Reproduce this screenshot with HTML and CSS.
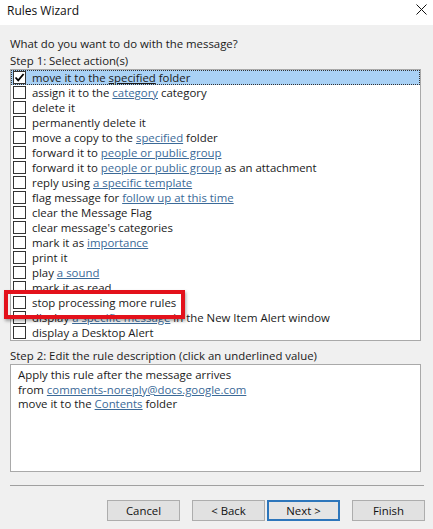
FILE: index.html
```html
<!DOCTYPE html>
<html>
<head>
<meta charset="utf-8">
<link rel="stylesheet" href="styles.css">
</head>
<body>
<div class="titlebar">
  <span class="title">Rules Wizard</span>
  <svg class="close" width="11" height="11" viewBox="0 0 11 11"><path d="M0.5 0.5 L10.5 10.5 M10.5 0.5 L0.5 10.5" stroke="#111" stroke-width="1" fill="none"/></svg>
</div>
<div class="content">
  <div class="label">What do you want to do with the message?</div>
  <div class="label">Step 1: Select action(s)</div>
  <div class="listwrap">
    <div class="list">
      <div class="row selected"><span class="cb checked"><svg width="11" height="11" viewBox="0 0 11 11"><path d="M1.5 5.5 L4.2 8.3 L9.6 2" stroke="#000" stroke-width="1.8" fill="none"/></svg></span><span>move it to the <u class="plain">specified</u> folder</span></div>
      <div class="row"><span class="cb"></span><span>assign it to the <a>category</a> category</span></div>
      <div class="row"><span class="cb"></span><span>delete it</span></div>
      <div class="row"><span class="cb"></span><span>permanently delete it</span></div>
      <div class="row"><span class="cb"></span><span>move a copy to the <a>specified</a> folder</span></div>
      <div class="row"><span class="cb"></span><span>forward it to <a>people or public group</a></span></div>
      <div class="row"><span class="cb"></span><span>forward it to <a>people or public group</a> as an attachment</span></div>
      <div class="row"><span class="cb"></span><span>reply using <a>a specific template</a></span></div>
      <div class="row"><span class="cb"></span><span>flag message for <a>follow up at this time</a></span></div>
      <div class="row"><span class="cb"></span><span>clear the Message Flag</span></div>
      <div class="row"><span class="cb"></span><span>clear message's categories</span></div>
      <div class="row"><span class="cb"></span><span>mark it as <a>importance</a></span></div>
      <div class="row"><span class="cb"></span><span>print it</span></div>
      <div class="row"><span class="cb"></span><span>play <a>a sound</a></span></div>
      <div class="row"><span class="cb"></span><span>mark it as read</span></div>
      <div class="row"><span class="cb"></span><span>stop processing more rules</span></div>
      <div class="row"><span class="cb"></span><span>display <a>a specific message</a> in the New Item Alert window</span></div>
      <div class="row"><span class="cb"></span><span>display a Desktop Alert</span></div>
    </div>
    <div class="highlight"></div>
  </div>
  <div class="label step2">Step 2: Edit the rule description (click an underlined value)</div>
  <div class="desc">
    <div class="dline">Apply this rule after the message arrives</div>
    <div class="dline">from <a>comments-noreply@docs.google.com</a></div>
    <div class="dline">move it to the <a>Contents</a> folder</div>
  </div>
  <div class="sep"></div>
  <div class="buttons">
    <button class="btn">Cancel</button>
    <button class="btn back">&lt; Back</button>
    <button class="btn primary">Next &gt;</button>
    <button class="btn finish">Finish</button>
  </div>
</div>
</body>
</html>
```
FILE: styles.css
```css
html, body {
  margin: 0;
  padding: 0;
}
body {
  width: 433px;
  height: 529px;
  background: #f0f0f0;
  font-family: "Open Sans", "Noto Sans", sans-serif;
  font-size: 11.4px;
  color: #1a1a1a;
  overflow: hidden;
}
.titlebar {
  height: 25px;
  background: #ffffff;
  display: flex;
  align-items: center;
  justify-content: space-between;
  padding: 0 6px 0 7px;
}
.title {
  font-size: 12px;
  color: #111;
  margin-top: -4px;
}
.close {
  margin-top: -6px;
}
.content {
  padding: 10px 9px 0 10px;
}
.label {
  height: 17px;
  line-height: 17px;
  white-space: nowrap;
}
.listwrap {
  position: relative;
  width: 411px;
}
.list {
  background: #ffffff;
  border: 1px solid #a9a9a9;
  height: 272px;
  box-sizing: border-box;
}
.row {
  height: 15px;
  display: flex;
  align-items: center;
  white-space: nowrap;
  padding-left: 2px;
  box-sizing: border-box;
}
.row.selected {
  background: #a9d1f5;
  outline: 1px dotted #333;
  outline-offset: -1px;
}
.cb {
  width: 11px;
  height: 11px;
  border: 1px solid #333;
  background: #fff;
  margin-right: 6px;
  flex: none;
  display: flex;
  align-items: center;
  justify-content: center;
}
a {
  color: #3b6a98;
  text-decoration: underline;
}
u.plain {
  text-decoration: underline;
}
.highlight {
  position: absolute;
  left: -6px;
  top: 221px;
  width: 173px;
  height: 21px;
  border: 4px solid #e3111b;
  box-shadow: 1px 2px 3px rgba(0,0,0,0.35);
}
.step2 {
  margin-top: 6px;
}
.desc {
  width: 411px;
  height: 108px;
  box-sizing: border-box;
  background: #fff;
  border: 1px solid #a9a9a9;
  padding: 3px 7px;
}
.dline {
  height: 14.5px;
  line-height: 14.5px;
  white-space: nowrap;
}
.sep {
  margin-top: 13px;
  width: 414px;
  height: 1px;
  background: #a0a0a0;
}
.buttons {
  display: flex;
  justify-content: flex-end;
  margin-top: 14px;
  width: 415px;
}
.btn {
  width: 73px;
  height: 21px;
  background: #e1e1e1;
  border: 1px solid #adadad;
  font-family: "Open Sans", "Noto Sans", sans-serif;
  font-size: 11.4px;
  color: #111;
  padding: 0;
  box-sizing: border-box;
}
.back {
  margin-left: 12px;
}
.primary {
  margin-left: 2px;
  border: 2px solid #2d76bb;
  background: #e5e5e5;
}
.finish {
  margin-left: 12px;
}
```
